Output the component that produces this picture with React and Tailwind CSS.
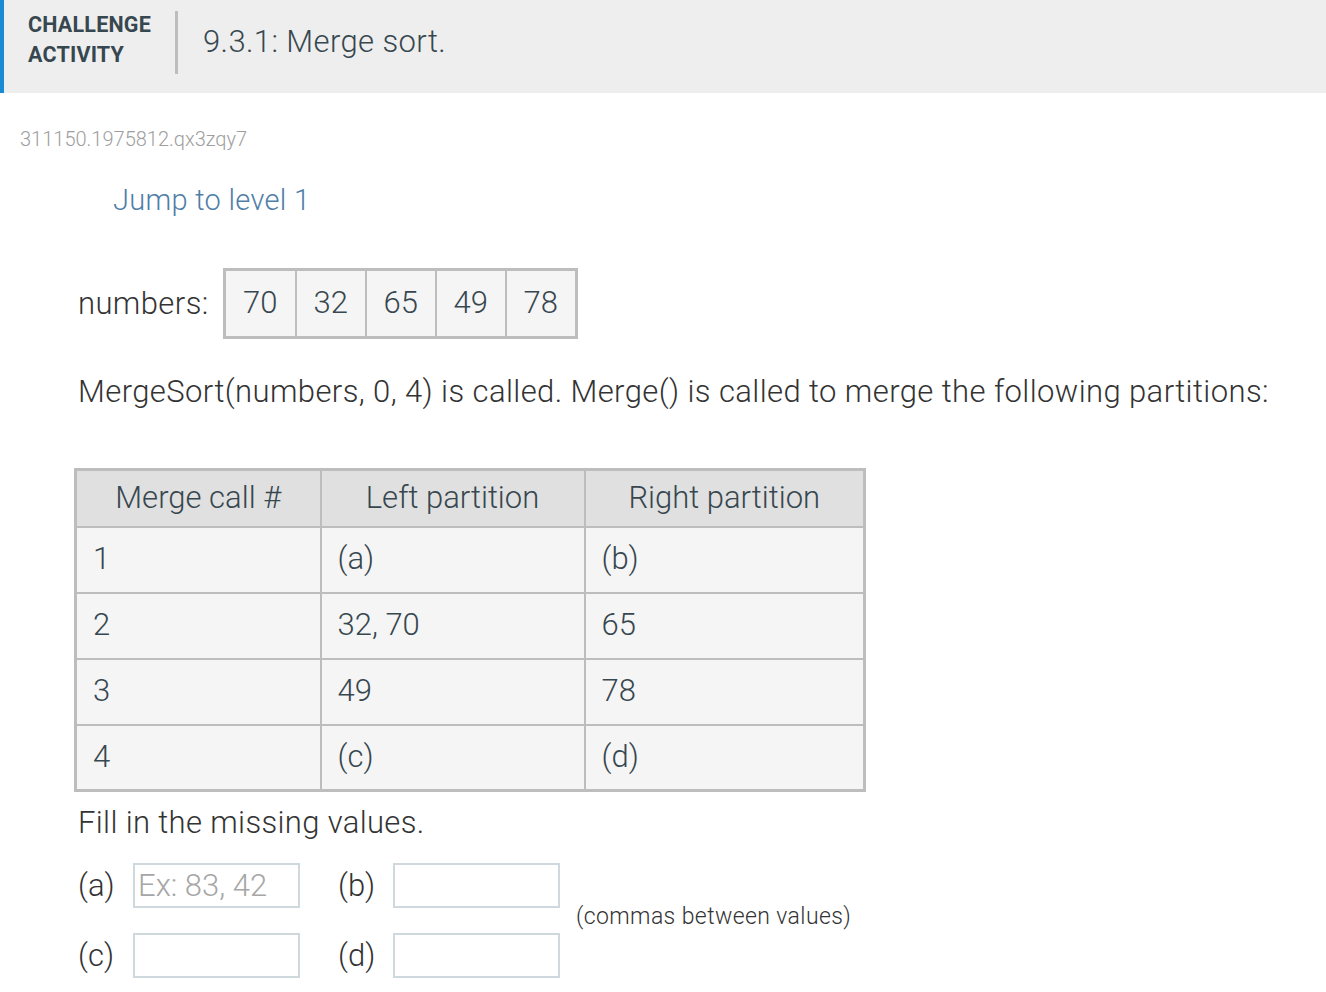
import {useState} from "react";

function App(){

    // Partition inputs
    const [answers, setAnswers] = useState({a: "", b: "", c: "", d: ""});

    const numbers = [70, 32, 65, 49, 78];

    const rows = [
        ["1", "(a)", "(b)"],
        ["2", "32, 70", "65"],
        ["3", "49", "78"],
        ["4", "(c)", "(d)"],
    ];

    const font = {fontFamily: "Roboto, 'Liberation Sans', sans-serif"};

    const InputBox = ({name, placeholder}) => (
        <input
            type="text"
            value={answers[name]}
            placeholder={placeholder}
            onChange={(e)=>setAnswers({...answers, [name]: e.target.value})}
            className="w-[167px] h-[45px] border-2 border-[#cfd8dc] bg-white px-[3px] text-[31px] font-light text-[#37474f] placeholder:text-[#a6a6a6] outline-none"
        />
    );

    return(
        <div style={font} className="w-[1326px] min-h-[992px] bg-white text-[#333333] font-light">
            {/*  Header  */}
            <div className="flex items-start h-[93px] bg-[#eeeeee] border-l-4 border-[#1a8ad4]">
                <div className="pl-6 pt-[10px] text-[21.5px] leading-[30px] font-bold tracking-[0.2px] text-[#37474f]">
                    <div>CHALLENGE</div>
                    <div>ACTIVITY</div>
                </div>
                <div className="ml-[24px] mt-[11px] w-[3px] h-[63px] bg-[#bdbdbd]"></div>
                <h1 className="ml-[25px] mt-[24px] text-[31px] leading-[36px] font-light tracking-[0.4px] text-[#37474f]">9.3.1: Merge sort.</h1>
            </div>

            {/*  Activity id  */}
            <p className="pl-5 mt-[34px] text-[20px] leading-[24px] text-[#9e9e9e]">311150.1975812.qx3zqy7</p>

            {/*  Jump to level  */}
            <button className="block ml-[113px] mt-[32px] text-[29px] leading-[34px] font-light tracking-[0.3px] text-[#4f7ea8] cursor-pointer">Jump to level 1</button>

            {/*  Numbers array  */}
            <div className="flex items-center ml-[78px] mt-[51px]">
                <span className="text-[31px] leading-[36px] tracking-[0.4px]">numbers:</span>
                <div className="flex ml-[14px] border-[3px] border-[#bdbdbd] bg-[#f5f5f5]">
                    {numbers.map((n, i)=>(
                        <div key={i} className={`${i > 0 ? "border-l-2 border-[#bdbdbd] w-[70px]" : "w-[69px]"} h-[65px] flex items-center justify-center text-[31px] text-[#37474f]`}>{n}</div>
                    ))}
                </div>
            </div>

            {/*  Question  */}
            <p className="ml-[78px] mt-[35px] text-[31px] leading-[36px] tracking-[0.4px]">MergeSort(numbers, 0, 4) is called. Merge() is called to merge the following partitions:</p>

            {/*  Merge table  */}
            <table className="ml-[74px] mt-[58px] border-collapse border-[3px] border-[#bdbdbd] text-[31px] text-[#37474f]">
                <thead>
                    <tr className="bg-[#e0e0e0] h-[57px]">
                        <th className="w-[245px] border-2 border-[#bdbdbd] font-light text-center">Merge call #</th>
                        <th className="w-[264px] border-2 border-[#bdbdbd] font-light text-center">Left partition</th>
                        <th className="w-[280px] border-2 border-[#bdbdbd] font-light text-center">Right partition</th>
                    </tr>
                </thead>
                <tbody>
                    {rows.map((row, i)=>(
                        <tr key={i} className="bg-[#f5f5f5] h-[66px]">
                            {row.map((cell, j)=>(
                                <td key={j} className="border-2 border-[#bdbdbd] px-[16px]">{cell}</td>
                            ))}
                        </tr>
                    ))}
                </tbody>
            </table>

            {/*  Answers  */}
            <p className="ml-[78px] mt-[13px] text-[31px] leading-[36px] tracking-[0.35px]">Fill in the missing values.</p>

            <div className="flex items-center ml-[78px] mt-[22px] pb-4">
                <div className="grid grid-cols-[36px_auto_auto_auto] items-center gap-y-[25px] text-[31px] leading-[36px]">
                    <span>(a)</span>
                    <div className="ml-[19px]"><InputBox name="a" placeholder="Ex: 83, 42"/></div>
                    <span className="ml-[38px] w-[55px]">(b)</span>
                    <div><InputBox name="b"/></div>
                    <span>(c)</span>
                    <div className="ml-[19px]"><InputBox name="c"/></div>
                    <span className="ml-[38px] w-[55px]">(d)</span>
                    <div><InputBox name="d"/></div>
                </div>
                <span className="ml-[16px] mb-[8px] text-[23px] leading-[28px] tracking-[0.4px]">(commas between values)</span>
            </div>
        </div>
    )
}

export default App;
